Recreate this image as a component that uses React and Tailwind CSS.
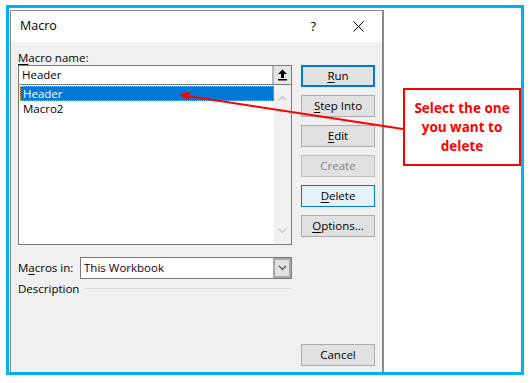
import React from 'react';

const font = { fontFamily: '"Open Sans", "Noto Sans", sans-serif' };

const Btn = ({ children, variant }) => {
  let cls = 'border border-[#adadad] bg-[#e1e1e1] text-black';
  if (variant === 'default') cls = 'border-2 border-[#0078d7] bg-[#e1e1e1] text-black';
  if (variant === 'disabled') cls = 'border border-[#bfbfbf] bg-[#e1e1e1] text-[#838383]';
  if (variant === 'hover') cls = 'border border-[#0078d7] bg-[#e5f1fb] text-black';
  return (
    <div className={`h-[22px] w-[74px] flex items-center justify-center text-[11.5px] leading-none ${cls}`}>
      {children}
    </div>
  );
};

const U = ({ children }) => <span className="underline underline-offset-2">{children}</span>;

const Chevron = ({ dir = 'down', color = '#c2c2c2' }) => (
  <svg width="9" height="6" viewBox="0 0 9 6">
    {dir === 'down'
      ? <path d="M1 1 L4.5 4.5 L8 1" fill="none" stroke={color} strokeWidth="1.2" />
      : <path d="M1 5 L4.5 1.5 L8 5" fill="none" stroke={color} strokeWidth="1.2" />}
  </svg>
);

export default function App() {
  return (
    <div className="relative w-[531px] h-[383px] bg-white overflow-hidden pt-[5px] pl-[6px]" style={font}>
      {/* frame */}
      <div className="w-[518px] h-[370px] border-[3px] border-[#00b0f0] pt-[2px] pl-[1px]">
        {/* dialog */}
        <div className="w-[374px] h-[362px] border-l border-t border-r-2 border-[#8a8a8a] flex flex-col">
          {/* title bar */}
          <div className="h-[31px] bg-white flex items-center pl-[9px] pr-[18px] shrink-0">
            <span className="text-[12.5px] text-black">Macro</span>
            <span className="ml-auto text-[13px] text-black mr-[37px]">?</span>
            <svg width="11" height="11" viewBox="0 0 11 11">
              <path d="M0.5 0.5 L10.5 10.5 M10.5 0.5 L0.5 10.5" stroke="#000" strokeWidth="1" />
            </svg>
          </div>
          {/* body */}
          <div className="flex-1 bg-[#f0f0f0] flex pl-[7px] pr-[7px] pt-[8px] pb-[6px] gap-[9px]">
            {/* left column */}
            <div className="w-[274px] flex flex-col">
              <div className="h-[15px] text-[11.5px] leading-[15px] text-black"><U>M</U>acro name:</div>
              <div className="h-[20px] flex border border-[#7a7a7a] bg-white">
                <div className="flex-1 text-[11.5px] leading-[18px] pl-[3px] text-black">Header</div>
                <div className="w-[19px] h-[18px] border-l-2 border-[#b9b9b9] bg-[#e6e6e6] flex items-center justify-center">
                  <svg width="11" height="12" viewBox="0 0 11 12">
                    <path d="M5.5 0.5 L10 5 H7 V9 H4 V5 H1 Z" fill="#000" />
                    <rect x="1" y="10" width="9" height="1.5" fill="#000" />
                  </svg>
                </div>
              </div>
              <div className="h-[160px] flex border border-t-0 border-[#7a7a7a] bg-white">
                <div className="flex-1 pl-px pt-px">
                  <div className="h-[15px] bg-[#0078d7] border border-dotted border-[#f3a13a] text-white text-[11.5px] leading-[13px] pl-[2px]">Header</div>
                  <div className="h-[16px] text-black text-[11.5px] leading-[16px] pl-[3px]">Macro2</div>
                </div>
                <div className="w-[17px] bg-[#f0f0f0] flex flex-col items-center justify-between py-[10px]">
                  <Chevron dir="up" />
                  <Chevron dir="down" />
                </div>
              </div>
              <div className="mt-[12px] flex items-center h-[22px]">
                <div className="w-[62px] text-[11.5px] text-black">M<U>a</U>cros in:</div>
                <div className="flex-1 h-[22px] flex border border-[#7a7a7a] bg-white">
                  <div className="flex-1 text-[11.5px] leading-[20px] pl-[3px] text-[#1a0010]">This Workbook</div>
                  <div className="w-[18px] h-[20px] border-2 border-[#a9a9a9] bg-[#e1e1e1] flex items-center justify-center">
                    <Chevron dir="down" color="#555" />
                  </div>
                </div>
              </div>
              <div className="mt-[2px] flex items-center h-[15px]">
                <span className="text-[11.5px] text-black">Description</span>
                <div className="flex-1 h-px bg-[#d9d9d9] ml-[5px]"></div>
              </div>
            </div>
            {/* right column */}
            <div className="flex flex-col pt-[15px] gap-[8px]">
              <Btn variant="default"><U>R</U>un</Btn>
              <Btn><U>S</U>tep Into</Btn>
              <Btn><U>E</U>dit</Btn>
              <Btn variant="disabled">Create</Btn>
              <Btn variant="hover"><U>D</U>elete</Btn>
              <Btn><U>O</U>ptions...</Btn>
              <div className="mt-auto"><Btn>Cancel</Btn></div>
            </div>
          </div>
        </div>
      </div>

      {/* annotation */}
      <div className="absolute left-[403px] top-[88px] w-[118px] h-[78px] border-2 border-[#ff0000] bg-white flex flex-col items-center justify-center text-[#ff0000] font-bold text-[13.5px] leading-[19px] text-center">
        <div>Select the one</div>
        <div>you want to</div>
        <div>delete</div>
      </div>
      <svg className="absolute left-0 top-0" width="531" height="383" viewBox="0 0 531 383">
        <line x1="403" y1="129" x2="187" y2="96" stroke="#ff0000" strokeWidth="2" />
        <path d="M179 95 L190 91 L188.5 100 Z" fill="#ff0000" />
      </svg>
    </div>
  );
}
